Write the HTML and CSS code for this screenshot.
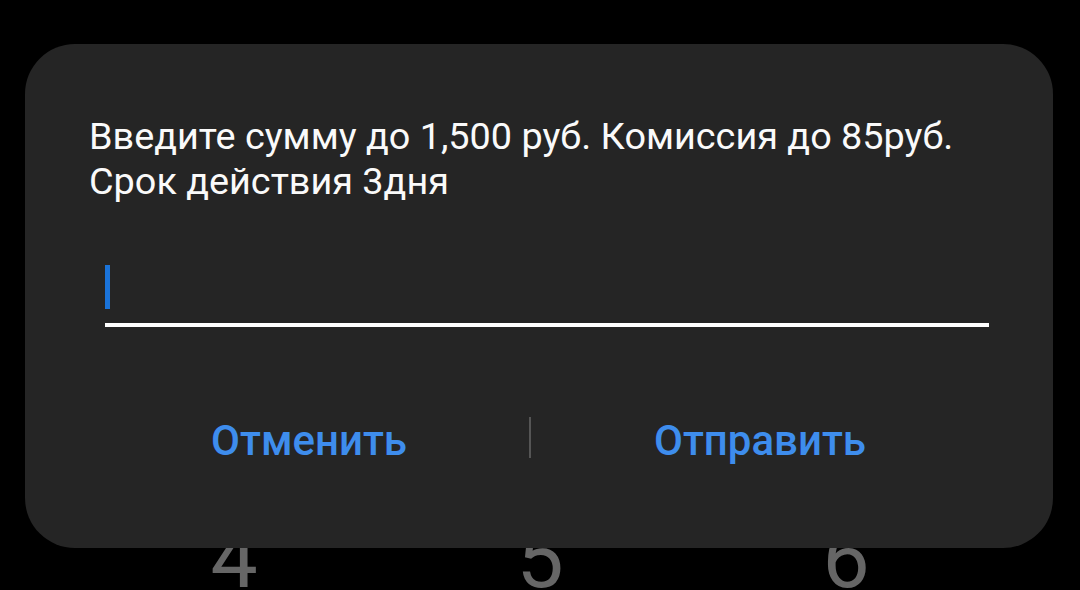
FILE: index.html
```html
<!DOCTYPE html>
<html lang="ru">
<head>
<meta charset="utf-8">
<title>Dialog</title>
<link rel="stylesheet" href="styles.css">
</head>
<body>
<div class="screen">
  <div class="keypad">
    <span class="digit">4</span>
    <span class="digit">5</span>
    <span class="digit">6</span>
  </div>
  <div class="dialog">
    <p class="message">Введите сумму до 1,500 руб. Комиссия до 85руб.<br>Срок действия 3дня</p>
    <div class="field"><span class="cursor"></span></div>
    <div class="actions">
      <button class="btn">Отменить</button>
      <span class="divider"></span>
      <button class="btn">Отправить</button>
    </div>
  </div>
</div>
</body>
</html>
```
FILE: styles.css
```css
html, body {
  margin: 0;
  padding: 0;
  background: #000;
}
.screen {
  position: relative;
  width: 1080px;
  height: 590px;
  overflow: hidden;
  display: flex;
  flex-direction: column;
  justify-content: flex-end;
  font-family: Roboto, "Noto Sans", sans-serif;
}
.keypad {
  display: grid;
  grid-template-columns: repeat(3, 306px);
  margin: 0 0 -11px 81px;
}
.digit {
  text-align: center;
  font-size: 84px;
  line-height: 84px;
  color: #666;
}
.dialog {
  position: absolute;
  left: 25px;
  top: 44px;
  width: 1028px;
  height: 504px;
  box-sizing: border-box;
  background: #252525;
  border-radius: 50px;
  padding: 0 64px;
  display: flex;
  flex-direction: column;
}
.message {
  margin: 70px 0 0;
  color: #fafafa;
  font-size: 37.8px;
  line-height: 45px;
}
.field {
  margin: 45px 0 0 16px;
  padding: 16px 0 14px;
  border-bottom: 4px solid #fff;
  display: flex;
}
.cursor {
  width: 5px;
  height: 44px;
  background: #1a73d9;
}
.actions {
  margin-top: 84px;
  display: grid;
  grid-template-columns: 440px 2px 1fr;
  align-items: start;
}
.btn {
  background: none;
  border: 0;
  padding: 0;
  font-family: Roboto, "Noto Sans", sans-serif;
  font-weight: 500;
  font-size: 42px;
  line-height: 60px;
  color: #3e8ded;
}
.divider {
  width: 2px;
  height: 41px;
  margin-top: 6px;
  background: #555;
}
```
